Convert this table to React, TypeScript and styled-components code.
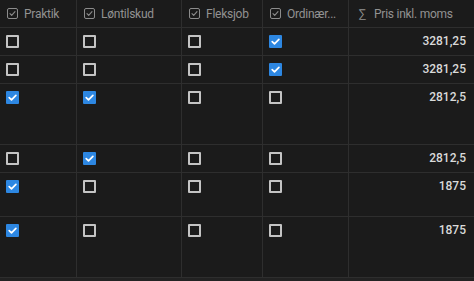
import React from 'react'
import styled, { createGlobalStyle } from 'styled-components'

const GlobalStyle = createGlobalStyle`
     html, body {
          margin: 0;
          padding: 0;
          background: #222222;
     }
     body {
          font-family: Roboto, "Open Sans", sans-serif;
     }
`

type Row = { flags: boolean[], price: string, height: number }

const rows: Row[] = [
     { flags: [false, false, false, true], price: "3281,25", height: 28 },
     { flags: [false, false, false, true], price: "3281,25", height: 28 },
     { flags: [true, true, false, false], price: "2812,5", height: 61 },
     { flags: [false, true, false, false], price: "2812,5", height: 28 },
     { flags: [true, false, false, false], price: "1875", height: 44 },
     { flags: [true, false, false, false], price: "1875", height: 61 },
]

const headers = ["Praktik", "Løntilskud", "Fleksjob", "Ordinær..."]

function HeaderCheckIcon() {
     return (
          <svg width="11" height="11" viewBox="0 0 11 11" fill="none">
               <rect x="0.5" y="0.5" width="10" height="10" rx="1.5" stroke="#8c8c8c" strokeWidth="1" />
               <path d="M3 5.6 L4.7 7.3 L8 3.6" stroke="#8c8c8c" strokeWidth="1.1" strokeLinecap="round" strokeLinejoin="round" />
          </svg>
     )
}

function CheckBox({ checked }: { checked: boolean }) {
     return (
          <Box checked={checked}>
               {checked && (
                    <svg width="13" height="13" viewBox="0 0 13 13" fill="none">
                         <path d="M3.2 6.6 L5.5 8.8 L9.9 4.4" stroke="#ffffff" strokeWidth="1.7" strokeLinecap="round" strokeLinejoin="round" />
                    </svg>
               )}
          </Box>
     )
}

export default function App() {
     return (
          <>
               <GlobalStyle />
               <Table>
                    <HeadRow>
                         {headers.map((h) => (
                              <HeadCell key={h}>
                                   <HeaderCheckIcon />
                                   <span>{h}</span>
                              </HeadCell>
                         ))}
                         <HeadCell>
                              <Sigma>∑</Sigma>
                              <span>Pris inkl. moms</span>
                         </HeadCell>
                    </HeadRow>
                    {rows.map((r, i) => (
                         <BodyRow key={i} style={{ height: r.height }}>
                              {r.flags.map((f, j) => (
                                   <Cell key={j}>
                                        <CheckBox checked={f} />
                                   </Cell>
                              ))}
                              <PriceCell>{r.price}</PriceCell>
                         </BodyRow>
                    ))}
               </Table>
          </>
     )
}

const Table = styled.div`
     width: 474px;
     height: 278px;
     background: #1b1b1b;
     display: flex;
     flex-direction: column;
     overflow: hidden;
`

const HeadRow = styled.div`
     display: grid;
     grid-template-columns: 77px 105px 81px 86px 1fr;
     height: 28px;
     box-sizing: border-box;
     border-bottom: 1px solid #2e2e2e;
`

const BodyRow = styled.div`
     display: grid;
     grid-template-columns: 77px 105px 81px 86px 1fr;
     box-sizing: border-box;
     border-bottom: 1px solid #2e2e2e;
`

const HeadCell = styled.div`
     display: flex;
     align-items: center;
     gap: 6px;
     padding-left: 7px;
     border-right: 1px solid #2e2e2e;
     color: #929292;
     font-size: 12px;
     letter-spacing: -0.25px;
     white-space: nowrap;
     overflow: hidden;
     &:last-child {
          border-right: none;
          padding-left: 9px;
          gap: 8px;
     }
`

const Sigma = styled.span`
     font-size: 12px;
     width: 8px;
     text-align: center;
`

const Cell = styled.div`
     border-right: 1px solid #2e2e2e;
     padding: 7px 0 0 6px;
`

const PriceCell = styled.div`
     padding: 6px 8px 0 0;
     text-align: right;
     color: #dadada;
     font-size: 12px;
     font-weight: 500;
`

const Box = styled.div<{ checked: boolean }>`
     width: 13px;
     height: 13px;
     box-sizing: border-box;
     border-radius: 1px;
     border: ${(p) => (p.checked ? "none" : "2px solid #c4c4c4")};
     background: ${(p) => (p.checked ? "#2d87e2" : "transparent")};
     display: flex;
`
